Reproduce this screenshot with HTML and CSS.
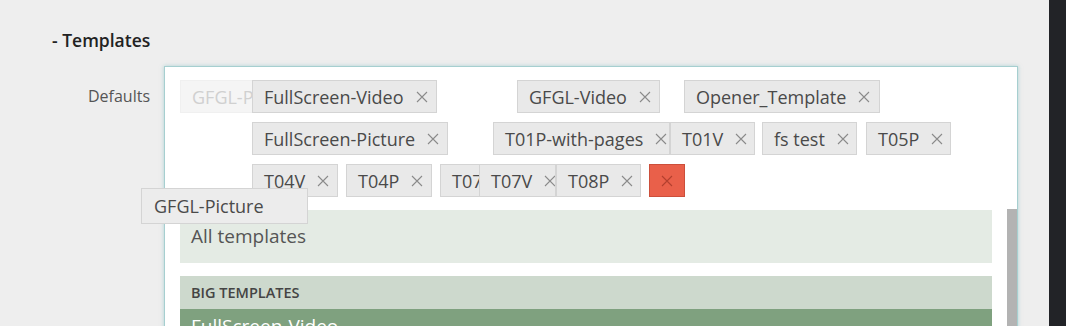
FILE: index.html
```html
<!DOCTYPE html>
<html>
<head>
<meta charset="utf-8">
<link rel="stylesheet" href="styles.css">
</head>
<body>
<div class="page">
  <h2 class="heading">- Templates</h2>
  <div class="field">
    <div class="label">Defaults</div>
    <div class="box">
      <div class="tags">
        <div class="row">
          <div class="chip ghost">GFGL-Picture</div>
          <div class="chip over-ghost w-185"><span>FullScreen-Video</span><svg class="x" viewBox="0 0 12 12"><path d="M1 1L11 11M11 1L1 11"/></svg></div>
          <div class="chip gap-80 w-143"><span>GFGL-Video</span><svg class="x" viewBox="0 0 12 12"><path d="M1 1L11 11M11 1L1 11"/></svg></div>
          <div class="chip gap-24 w-196"><span>Opener_Template</span><svg class="x" viewBox="0 0 12 12"><path d="M1 1L11 11M11 1L1 11"/></svg></div>
        </div>
        <div class="row">
          <div class="chip first w-196"><span>FullScreen-Picture</span><svg class="x" viewBox="0 0 12 12"><path d="M1 1L11 11M11 1L1 11"/></svg></div>
          <div class="chip gap-45 w-177"><span>T01P-with-pages</span><svg class="x" viewBox="0 0 12 12"><path d="M1 1L11 11M11 1L1 11"/></svg></div>
          <div class="chip gap-0 w-85"><span>T01V</span><svg class="x" viewBox="0 0 12 12"><path d="M1 1L11 11M11 1L1 11"/></svg></div>
          <div class="chip gap-7 w-95"><span>fs test</span><svg class="x" viewBox="0 0 12 12"><path d="M1 1L11 11M11 1L1 11"/></svg></div>
          <div class="chip gap-9 w-85"><span>T05P</span><svg class="x" viewBox="0 0 12 12"><path d="M1 1L11 11M11 1L1 11"/></svg></div>
        </div>
        <div class="row">
          <div class="chip first w-86"><span>T04V</span><svg class="x" viewBox="0 0 12 12"><path d="M1 1L11 11M11 1L1 11"/></svg></div>
          <div class="chip gap-8 w-86"><span>T04P</span><svg class="x" viewBox="0 0 12 12"><path d="M1 1L11 11M11 1L1 11"/></svg></div>
          <div class="chip gap-8 clipped w-39"><span>T07P</span><svg class="x" viewBox="0 0 12 12"><path d="M1 1L11 11M11 1L1 11"/></svg></div>
          <div class="chip gap-0 clipped w-77"><span>T07V</span><svg class="x" viewBox="0 0 12 12"><path d="M1 1L11 11M11 1L1 11"/></svg></div>
          <div class="chip gap-0 w-85"><span>T08P</span><svg class="x" viewBox="0 0 12 12"><path d="M1 1L11 11M11 1L1 11"/></svg></div>
          <div class="clear gap-8"><svg class="x" viewBox="0 0 12 12"><path d="M1 1L11 11M11 1L1 11"/></svg></div>
        </div>
      </div>
      <div class="listwrap">
        <div class="list">
          <div class="all">All templates</div>
          <div class="group">Big templates</div>
          <div class="option">FullScreen-Video</div>
        </div>
        <div class="scrollbar"></div>
      </div>
    </div>
  </div>
  <div class="drag">GFGL-Picture</div>
</div>
<div class="strip"></div>
</body>
</html>
```

FILE: styles.css
```css
html, body {
  margin: 0;
  height: 326px;
  overflow: hidden;
}
body {
  display: flex;
  background: #eeeeee;
  font-family: "Open Sans", "Noto Sans", sans-serif;
  color: #444;
}
.page {
  flex: 1;
  position: relative;
  padding: 29px 31px 0 52px;
}
.strip {
  width: 17px;
  background: #222327;
}
.heading {
  margin: 0;
  font-size: 17.5px;
  line-height: 23px;
  font-weight: 600;
  color: #222;
}
.field {
  display: flex;
  margin-top: 14px;
}
.label {
  width: 98px;
  padding-right: 14px;
  padding-top: 19px;
  text-align: right;
  font-size: 16px;
  line-height: 22px;
  color: #555;
}
.box {
  flex: 1;
  height: 320px;
  box-sizing: border-box;
  background: #fff;
  border: 1px solid #a6cfd0;
  box-shadow: 0 0 4px rgba(120, 185, 190, 0.55);
  padding-top: 13px;
}
.tags {
  padding-left: 15px;
}
.row {
  display: flex;
  height: 33px;
  margin-bottom: 9px;
}
.row:last-child {
  margin-bottom: 0;
}
.chip {
  position: relative;
  display: flex;
  align-items: center;
  justify-content: space-between;
  flex: none;
  box-sizing: border-box;
  height: 33px;
  padding: 0 10px 0 11px;
  gap: 12px;
  background: #e9e9e9;
  border: 1px solid #d4d4d4;
  font-size: 18px;
  line-height: 22px;
  color: #4a4a4a;
  white-space: nowrap;
}
.x {
  width: 12px;
  height: 12px;
  flex: none;
  fill: none;
  stroke: #8a8a8a;
  stroke-width: 1.1;
}
.ghost {
  width: 154px;
  overflow: hidden;
  background: #f5f5f5;
  border-color: #f0f0f0;
  color: #d0d0d0;
  justify-content: flex-start;
}
.w-39 { width: 39px; }
.w-77 { width: 77px; }
.w-85 { width: 85px; }
.w-86 { width: 86px; }
.w-95 { width: 95px; }
.w-143 { width: 143px; }
.w-177 { width: 177px; }
.w-185 { width: 185px; }
.w-196 { width: 196px; }
.over-ghost { margin-left: -82px; }
.first { margin-left: 72px; }
.gap-0 { margin-left: 0; }
.gap-7 { margin-left: 7px; }
.gap-8 { margin-left: 8px; }
.gap-9 { margin-left: 9px; }
.gap-24 { margin-left: 24px; }
.gap-45 { margin-left: 45px; }
.gap-80 { margin-left: 80px; }
.clipped {
  overflow: hidden;
  justify-content: flex-start;
}
.clipped.w-39 {
  border-right: none;
}
.clear {
  display: flex;
  align-items: center;
  justify-content: center;
  box-sizing: border-box;
  width: 36px;
  height: 33px;
  background: #e9604a;
  border: 1px solid #cc4f3b;
}
.clear .x {
  stroke: #b3402f;
}
.listwrap {
  display: flex;
  margin-top: 12px;
  padding-left: 15px;
  gap: 15px;
}
.list {
  width: 812px;
  padding-top: 1px;
}
.scrollbar {
  width: 10px;
  height: 200px;
  background: #b3b3b3;
}
.all {
  height: 53px;
  box-sizing: border-box;
  padding: 13px 11px 0;
  background: #e4ebe4;
  font-size: 19px;
  line-height: 26px;
  color: #555;
}
.group {
  margin-top: 13px;
  height: 33px;
  box-sizing: border-box;
  padding: 7px 11px 0;
  background: #cdd9cd;
  font-size: 14.5px;
  line-height: 20px;
  font-weight: 600;
  text-transform: uppercase;
  color: #444;
}
.option {
  height: 40px;
  padding: 4px 11px 0;
  background: #7fa17f;
  color: #fff;
  font-size: 19px;
  line-height: 26px;
}
.drag {
  position: absolute;
  left: 141px;
  top: 188px;
  width: 167px;
  height: 36px;
  box-sizing: border-box;
  padding: 5px 12px 0;
  background: #ececec;
  border: 1px solid #d4d4d4;
  font-size: 18px;
  line-height: 24px;
  color: #4a4a4a;
}
```
